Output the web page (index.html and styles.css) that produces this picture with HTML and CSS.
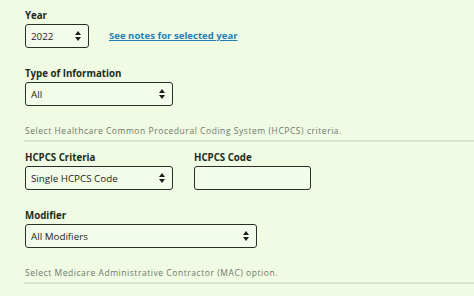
FILE: index.html
```html
<!DOCTYPE html>
<html lang="en">
<head>
  <meta charset="UTF-8">
  <title>Search criteria</title>
  <link rel="stylesheet" href="styles.css">
</head>
<body>
  <div class="form">
    <div class="field">
      <label class="label">Year</label>
      <div class="row">
        <div class="select-wrap w-year">
          <select><option>2022</option></select>
          <svg class="arrows" width="6" height="10" viewBox="0 0 6 10"><path d="M3 0L6 4H0Z M3 10L0 6H6Z" fill="#1f1f1f"/></svg>
        </div>
        <a href="#" class="notes">See notes for selected year</a>
      </div>
    </div>

    <div class="field">
      <label class="label">Type of Information</label>
      <div class="select-wrap w-mid">
        <select><option>All</option></select>
        <svg class="arrows" width="6" height="10" viewBox="0 0 6 10"><path d="M3 0L6 4H0Z M3 10L0 6H6Z" fill="#1f1f1f"/></svg>
      </div>
    </div>

    <p class="help">Select Healthcare Common Procedural Coding System (HCPCS) criteria.</p>

    <div class="row cols">
      <div class="field first">
        <label class="label">HCPCS Criteria</label>
        <div class="select-wrap w-mid">
          <select><option>Single HCPCS Code</option></select>
          <svg class="arrows" width="6" height="10" viewBox="0 0 6 10"><path d="M3 0L6 4H0Z M3 10L0 6H6Z" fill="#1f1f1f"/></svg>
        </div>
      </div>
      <div class="field first">
        <label class="label">HCPCS Code</label>
        <input type="text" class="code">
      </div>
    </div>

    <div class="field">
      <label class="label">Modifier</label>
      <div class="select-wrap w-wide">
        <select><option>All Modifiers</option></select>
        <svg class="arrows" width="6" height="10" viewBox="0 0 6 10"><path d="M3 0L6 4H0Z M3 10L0 6H6Z" fill="#1f1f1f"/></svg>
      </div>
    </div>

    <p class="help">Select Medicare Administrative Contractor (MAC) option.</p>
  </div>
</body>
</html>
```

FILE: styles.css
```css
html, body {
  margin: 0;
  background-color: #f0fbe4;
}
body {
  font-family: 'Open Sans', 'Noto Sans', sans-serif;
  color: #1c2a1c;
  overflow: hidden;
}
.form {
  padding: 9px 0 0 24px;
}
.field {
  margin-bottom: 19px;
}
.label {
  display: block;
  font-size: 9.7px;
  font-weight: bold;
  line-height: 14px;
  margin: 0 0 1px 1px;
}
.row {
  display: flex;
  align-items: center;
}
.cols {
  align-items: flex-start;
}
.first {
  margin-right: 20px;
}
.select-wrap {
  position: relative;
  margin-left: 1px;
}
.select-wrap select {
  appearance: none;
  -webkit-appearance: none;
  display: block;
  width: 100%;
  height: 24px;
  box-sizing: border-box;
  border: 1.5px solid #2b2f2a;
  border-radius: 3px;
  background-color: #f3fcea;
  font-family: inherit;
  font-size: 9.8px;
  color: #222;
  padding: 0 0 0 5px;
  margin: 0;
}
.arrows {
  position: absolute;
  right: 8px;
  top: 7px;
  pointer-events: none;
}
.w-year { width: 64px; }
.w-mid { width: 148px; }
.w-wide { width: 232px; }
.notes {
  margin-left: 20px;
  margin-bottom: 1px;
  font-size: 9.6px;
  font-weight: bold;
  color: #1f7fb5;
  text-decoration: underline;
  text-underline-offset: 1px;
}
.code {
  display: block;
  width: 117px;
  height: 24px;
  box-sizing: border-box;
  border: 1.5px solid #2b2f2a;
  border-radius: 3px;
  background-color: #f3fcea;
  margin: 0 0 0 1px;
  padding: 0 5px;
}
.help {
  margin: 1px 0 9px 0;
  padding: 0 0 3px 1px;
  font-size: 8.5px;
  line-height: 12px;
  letter-spacing: 0.55px;
  color: #6e786b;
  border-bottom: 2px solid #d8e3cd;
}
```
